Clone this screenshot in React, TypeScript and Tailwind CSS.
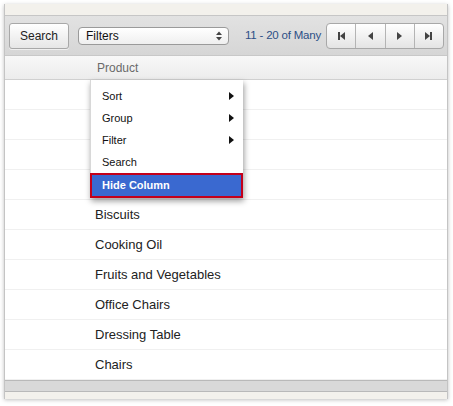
import React from 'react';

const rows = ['', '', '', '', 'Biscuits', 'Cooking Oil', 'Fruits and Vegetables', 'Office Chairs', 'Dressing Table', 'Chairs'];

const menuItems = [
  { label: 'Sort', sub: true },
  { label: 'Group', sub: true },
  { label: 'Filter', sub: true },
  { label: 'Search', sub: false },
];

function Tri({ dir }: { dir: 'left' | 'right' }) {
  return (
    <svg width="5" height="8" viewBox="0 0 5 8" className="block">
      {dir === 'right' ? <path d="M0 0 L5 4 L0 8 Z" fill="#111" /> : <path d="M5 0 L0 4 L5 8 Z" fill="#111" />}
    </svg>
  );
}

function PagerIcon({ kind }: { kind: 'first' | 'prev' | 'next' | 'last' }) {
  return (
    <svg width="9" height="10" viewBox="0 0 9 10" className="block">
      {kind === 'first' && (
        <>
          <rect x="1" y="1" width="2" height="8" fill="#444" />
          <path d="M8 1 L3 5 L8 9 Z" fill="#444" />
        </>
      )}
      {kind === 'prev' && <path d="M7 1 L2 5 L7 9 Z" fill="#444" />}
      {kind === 'next' && <path d="M2 1 L7 5 L2 9 Z" fill="#444" />}
      {kind === 'last' && (
        <>
          <path d="M1 1 L6 5 L1 9 Z" fill="#444" />
          <rect x="6" y="1" width="2" height="8" fill="#444" />
        </>
      )}
    </svg>
  );
}

export default function App() {
  return (
    <div className="w-[453px] h-[406px] bg-white pt-[4px] pl-[4px]" style={{ fontFamily: '"Liberation Sans", Arial, sans-serif' }}>
      <div className="w-[444px] h-[395px] flex flex-col border-x border-[#c4c4c4] shadow-[0_1px_4px_rgba(0,0,0,0.25)] bg-white">
        <div className="h-[11px] bg-[#f3f1ec] border-b border-[#c6c6c6] box-content" />

        <div className="h-[39px] flex items-center bg-gradient-to-b from-[#e2e2e2] to-[#d6d6d6] pl-[4px]">
          <button className="shrink-0 w-[60px] h-[26px] rounded-[3px] border border-[#a8a8a8] bg-gradient-to-b from-white to-[#e6e6e6] text-[12px] text-[#222] shadow-[0_1px_0_rgba(255,255,255,0.6)]">
            Search
          </button>
          <div className="shrink-0 ml-[9px] w-[151px] h-[18px] rounded-[4px] border border-[#9a9a9a] bg-gradient-to-b from-white to-[#efefef] flex items-center pl-[7px] pr-[6px]">
            <span className="text-[12px] text-[#111] flex-1">Filters</span>
            <svg width="6" height="10" viewBox="0 0 6 10">
              <path d="M0 4 L3 0.5 L6 4 Z" fill="#444" />
              <path d="M0 6 L3 9.5 L6 6 Z" fill="#444" />
            </svg>
          </div>
          <span className="shrink-0 ml-[16px] w-[78px] whitespace-nowrap text-[11.5px] tracking-[-0.2px] text-[#2c4f86]">11 - 20 of Many</span>
          <div className="shrink-0 ml-[3px] flex h-[26px] w-[118px] rounded-[4px] border border-[#a8a8a8] bg-gradient-to-b from-white to-[#e4e4e4] overflow-hidden">
            {(['first', 'prev', 'next', 'last'] as const).map((k, i) => (
              <div key={k} className={`flex-1 flex items-center justify-center ${i > 0 ? 'border-l border-[#b4b4b4]' : ''}`}>
                <PagerIcon kind={k} />
              </div>
            ))}
          </div>
        </div>

        <div className="h-[25px] flex items-center border-t border-[#c8c8c8] border-b border-b-[#d0d0d0] bg-gradient-to-b from-[#f8f8f8] to-[#ececec]">
          <span className="ml-[92px] text-[12px] text-[#6a6a6a]">Product</span>
        </div>

        <div className="relative flex-1 flex flex-col">
          {rows.map((r, i) => (
            <div key={i} className="h-[30px] flex items-center border-b border-[#f0f0f0] last:border-b-0">
              <span className="ml-[90px] text-[13px] text-[#222]">{r}</span>
            </div>
          ))}

          <div className="absolute left-[85px] top-0 w-[153px] h-[118px] bg-white pt-[5px] shadow-[1px_3px_6px_rgba(0,0,0,0.4)] border-l border-[#d8d8d8]">
            {menuItems.map((m) => (
              <div key={m.label} className="h-[22px] flex items-center pl-[11px] pr-[9px]">
                <span className="flex-1 text-[11px] text-[#111]">{m.label}</span>
                {m.sub && <Tri dir="right" />}
              </div>
            ))}
            <div className="h-[25px] -ml-px flex items-center pl-[10px] bg-[#3a69d0] border-2 border-[#c4001a]">
              <span className="text-[11px] font-bold text-white">Hide Column</span>
            </div>
          </div>
        </div>

        <div className="h-[10px] bg-[#d9d9d9] border-t border-b border-[#b9b9b9] box-content" />
        <div className="h-[7px] bg-[#f3f1ec]" />
      </div>
    </div>
  );
}
